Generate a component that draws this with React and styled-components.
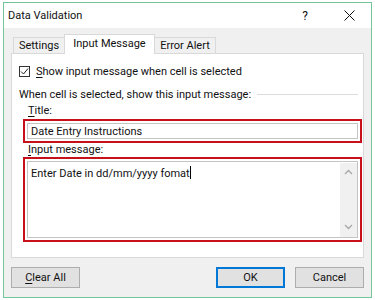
import React from "react";
import styled, { createGlobalStyle } from "styled-components";

const Global = createGlobalStyle`
  html, body {
    margin: 0;
    padding: 0;
    background: #fff;
  }
  body {
    font-family: Roboto, "Noto Sans", sans-serif;
    font-size: 11px;
    color: #111;
  }
`;

const Window = styled.div`
  margin: 2px 3px 0 3px;
  height: 296px;
  box-sizing: border-box;
  border: 1px solid #74c69a;
  background: #f0f0f0;
  display: flex;
  flex-direction: column;
`;

const TitleBar = styled.div`
  height: 25px;
  background: #fff;
  display: flex;
  align-items: center;
  padding-left: 4px;
`;

const Caption = styled.div`
  flex: 1;
  font-size: 11px;
`;

const TitleBtn = styled.div`
  width: 44px;
  height: 25px;
  display: grid;
  place-items: center;
  font-size: 12px;
`;

const Body = styled.div`
  flex: 1;
  display: flex;
  flex-direction: column;
  padding: 7px 7px 7px 7px;
`;

const TabRow = styled.div`
  display: flex;
  align-items: flex-end;
  padding-left: 2px;
  height: 19px;
  position: relative;
  z-index: 1;
  margin-bottom: -1px;
`;

const Tab = styled.div`
  box-sizing: border-box;
  width: ${(p) => p.w}px;
  height: ${(p) => (p.active ? 20 : 17)}px;
  display: flex;
  align-items: center;
  justify-content: center;
  border: 1px solid #d9d9d9;
  border-bottom: ${(p) => (p.active ? "none" : "1px solid #d9d9d9")};
  background: ${(p) => (p.active ? "#fff" : "#f0f0f0")};
  margin-left: ${(p) => (p.overlap ? -1 : 0)}px;
  padding-bottom: ${(p) => (p.active ? 2 : 0)}px;
`;

const Panel = styled.div`
  box-sizing: border-box;
  height: 205px;
  border: 1px solid #d9d9d9;
  background: #fff;
  padding: 11px 0 0 7px;
  display: flex;
  flex-direction: column;
`;

const CheckRow = styled.div`
  display: flex;
  align-items: center;
  gap: 6px;
  height: 12px;
`;

const CheckBox = styled.div`
  box-sizing: border-box;
  width: 11px;
  height: 11px;
  border: 1px solid #333;
  background: #fff;
  display: grid;
  place-items: center;
`;

const Underline = styled.span`
  text-decoration: underline;
  text-underline-offset: 2px;
`;

const SectionRow = styled.div`
  display: flex;
  align-items: center;
  gap: 6px;
  margin-top: 9px;
  padding-right: 5px;
  height: 16px;
`;

const Rule = styled.div`
  flex: 1;
  height: 1px;
  background: #dcdcdc;
`;

const FieldLabel = styled.div`
  margin-left: 9px;
  margin-top: ${(p) => p.top}px;
  height: 12px;
  line-height: 12px;
`;

const Highlight = styled.div`
  box-sizing: border-box;
  margin-left: 4px;
  margin-top: ${(p) => p.top}px;
  margin-right: 1px;
  height: ${(p) => p.h}px;
  border: 2px solid #c8101c;
  padding: 2px;
  display: flex;
`;

const TextBox = styled.div`
  box-sizing: border-box;
  flex: 1;
  border: 1px solid #c4c4c4;
  background: #fff;
  display: flex;
  align-items: ${(p) => (p.multi ? "flex-start" : "center")};
  padding: ${(p) => (p.multi ? "4px 0 0 3px" : "0 0 0 3px")};
`;

const Caret = styled.span`
  display: inline-block;
  width: 1px;
  height: 13px;
  background: #000;
  vertical-align: -2px;
`;

const MessageText = styled.div`
  flex: 1;
`;

const ScrollBar = styled.div`
  width: 17px;
  align-self: stretch;
  margin: -3px 0 0 0;
  background: #f0f0f0;
  display: flex;
  flex-direction: column;
  justify-content: space-between;
  align-items: center;
  padding: 6px 0 7px;
`;

const ButtonRow = styled.div`
  display: flex;
  margin-top: 9px;
  gap: 10px;
`;

const Button = styled.div`
  box-sizing: border-box;
  width: 69px;
  height: 21px;
  display: grid;
  place-items: center;
  background: #e1e1e1;
  border: 1px solid ${(p) => (p.primary ? "#0078d7" : "#adadad")};
  box-shadow: ${(p) => (p.primary ? "inset 0 0 0 1px #0078d7" : "none")};
  margin-left: ${(p) => (p.push ? "auto" : "0")};
`;

const Chevron = ({ up }) => (
  <svg width="9" height="6" viewBox="0 0 9 6">
    <polyline
      points={up ? "1,5 4.5,1.5 8,5" : "1,1 4.5,4.5 8,1"}
      fill="none"
      stroke="#a6a6a6"
      strokeWidth="1.3"
    />
  </svg>
);

export default function App() {
  return (
    <>
      <Global />
      <Window>
        <TitleBar>
          <Caption>Data Validation</Caption>
          <TitleBtn>?</TitleBtn>
          <TitleBtn>
            <svg width="11" height="11" viewBox="0 0 11 11">
              <path d="M0.5 0.5 L10.5 10.5 M10.5 0.5 L0.5 10.5" stroke="#111" strokeWidth="1" />
            </svg>
          </TitleBtn>
        </TitleBar>
        <Body>
          <TabRow>
            <Tab w={52}>Settings</Tab>
            <Tab w={91} active overlap>Input Message</Tab>
            <Tab w={62} overlap>Error Alert</Tab>
          </TabRow>
          <Panel>
            <CheckRow>
              <CheckBox>
                <svg width="9" height="9" viewBox="0 0 9 9">
                  <polyline points="1,4.5 3.5,7 8,1.5" fill="none" stroke="#222" strokeWidth="1" />
                </svg>
              </CheckBox>
              <span>
                <Underline>S</Underline>how input message when cell is selected
              </span>
            </CheckRow>
            <SectionRow>
              <span>When cell is selected, show this input message:</span>
              <Rule />
            </SectionRow>
            <FieldLabel top={3}>
              <Underline>T</Underline>itle:
            </FieldLabel>
            <Highlight top={2} h={24}>
              <TextBox>Date Entry Instructions</TextBox>
            </Highlight>
            <FieldLabel top={1}>
              <Underline>I</Underline>nput message:
            </FieldLabel>
            <Highlight top={1} h={85}>
              <TextBox multi>
                <MessageText>
                  Enter Date in dd/mm/yyyy fomat<Caret />
                </MessageText>
                <ScrollBar>
                  <Chevron up />
                  <Chevron />
                </ScrollBar>
              </TextBox>
            </Highlight>
          </Panel>
          <ButtonRow>
            <Button>
              <span>
                <Underline>C</Underline>lear All
              </span>
            </Button>
            <Button primary push>OK</Button>
            <Button>Cancel</Button>
          </ButtonRow>
        </Body>
      </Window>
    </>
  );
}
